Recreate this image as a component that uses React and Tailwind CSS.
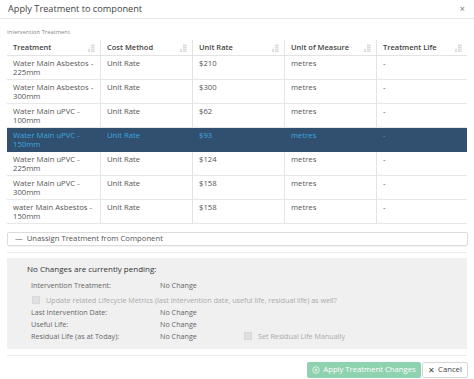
import React from 'react'

const rows = [
  { t: 'Water Main Asbestos - 225mm', c: 'Unit Rate', r: '$210', u: 'metres', l: '-' },
  { t: 'Water Main Asbestos - 300mm', c: 'Unit Rate', r: '$300', u: 'metres', l: '-' },
  { t: 'Water Main uPVC - 100mm', c: 'Unit Rate', r: '$62', u: 'metres', l: '-' },
  { t: 'Water Main uPVC - 150mm', c: 'Unit Rate', r: '$93', u: 'metres', l: '-', sel: true },
  { t: 'Water Main uPVC - 225mm', c: 'Unit Rate', r: '$124', u: 'metres', l: '-' },
  { t: 'Water Main uPVC - 300mm', c: 'Unit Rate', r: '$158', u: 'metres', l: '-' },
  { t: 'water Main Asbestos - 150mm', c: 'Unit Rate', r: '$158', u: 'metres', l: '-' },
]

function SortIcon() {
  return (
    <svg width="7" height="8" viewBox="0 0 7 8" className="shrink-0">
      <path d="M1 4.8v2.6M0.3 6.8l0.7 0.7 0.7-0.7" stroke="#a0a5aa" strokeWidth="0.6" fill="none" />
      <path d="M3 1.2h3.6M3 3.2h3.6M3 5.2h3.6M3 7.2h3.6" stroke="#a0a5aa" strokeWidth="0.6" />
    </svg>
  )
}

const headers = ['Treatment', 'Cost Method', 'Unit Rate', 'Unit of Measure', 'Treatment Life']

export default function App() {
  return (
    <div
      className="w-[474px] h-[379px] overflow-hidden bg-white text-[#555]"
      style={{ fontFamily: '"Open Sans", "Liberation Sans", sans-serif' }}
    >
      {/* header */}
      <div className="h-[19px] flex items-center justify-between px-2 border-b border-[#e6e6e6]">
        <span className="text-[9.2px] text-[#444]">Apply Treatment to component</span>
        <span className="text-[9px] text-[#777] pr-[1px]">×</span>
      </div>

      <div className="px-[7px]">
        <div className="text-[5.8px] text-[#888] pt-[10px] h-[21px] leading-[7px]">Intervention Treatment</div>

        <div className="w-[460px]">
          <div className="grid grid-cols-[93px_92px_92px_92px_91px] h-[16px] border-b border-[#e3e3e3]">
            {headers.map((h, i) => (
              <div
                key={h}
                className={`flex items-center justify-between pl-[6px] pr-[5px] ${i > 0 ? 'border-l border-[#e3e3e3]' : ''}`}
              >
                <span className="text-[7.5px] font-semibold text-[#444]">{h}</span>
                <SortIcon />
              </div>
            ))}
          </div>

          {rows.map((row, idx) => {
            const cells = [row.t, row.c, row.r, row.u, row.l]
            return (
              <div
                key={idx}
                className={`grid grid-cols-[93px_92px_92px_92px_91px] h-[24px] border-b ${
                  row.sel ? 'bg-[#31506f] border-[#31506f] text-[#3aa6e0]' : 'border-[#e8e8e8] text-[#555]'
                }`}
              >
                {cells.map((c, i) => (
                  <div
                    key={i}
                    className={`pl-[6px] pr-[3px] pt-[3px] text-[7.7px] leading-[9px] ${
                      i > 0 ? (row.sel ? 'border-l border-[#31506f]' : 'border-l border-[#e3e3e3]') : ''
                    }`}
                  >
                    {c}
                  </div>
                ))}
              </div>
            )
          })}
        </div>

        <div className="mt-[8px] h-[14px] w-[461px] border border-[#dcdcdc] rounded-[2px] flex items-center pl-[7px] text-[7.7px] text-[#555] shadow-[0_1px_1px_rgba(0,0,0,0.05)]">
          <span className="mr-[4px] text-[#666]">—</span>
          Unassign Treatment from Component
        </div>

        <div className="mt-[6px] border-t border-[#ececec]" />

        <div className="mt-[5px] w-[460px] h-[91px] bg-[#f0f0f1] pl-[20px] pt-[6px]">
          <div className="text-[8px] text-[#333] leading-[10px]">No Changes are currently pending:</div>
          <div className="pl-[4px] mt-[5px] text-[7.2px] leading-[12px] text-[#666] whitespace-nowrap">
            <div className="flex">
              <span className="w-[129px] shrink-0">Intervention Treatment:</span>
              <span>No Change</span>
            </div>
            <div className="flex items-center mt-[3px] text-[#aaa]">
              <span className="w-[8px] h-[8px] bg-[#e0e0e2] border border-[#d8d8da] mr-[6px] ml-[1px]" />
              Update related Lifecycle Metrics (last intervention date, useful life, residual life) as well?
            </div>
            <div className="flex">
              <span className="w-[129px] shrink-0">Last Intervention Date:</span>
              <span>No Change</span>
            </div>
            <div className="flex">
              <span className="w-[129px] shrink-0">Useful Life:</span>
              <span>No Change</span>
            </div>
            <div className="flex items-center">
              <span className="w-[129px] shrink-0">Residual Life (as at Today):</span>
              <span className="w-[84px] shrink-0">No Change</span>
              <span className="w-[8px] h-[8px] bg-[#e0e0e2] border border-[#d8d8da] mr-[6px]" />
              <span className="text-[#aaa]">Set Residual Life Manually</span>
            </div>
          </div>
        </div>

        <div className="mt-[6px] border-t border-[#ececec]" />

        <div className="flex justify-end gap-[1px] mt-[6px] w-[461px]">
          <div className="h-[16px] w-[114px] bg-[#8fd2b0] rounded-[2px] flex items-center justify-center text-[7.7px] text-white">
            <svg width="8" height="8" viewBox="0 0 8 8" className="mr-[3px]">
              <circle cx="4" cy="4" r="3.3" stroke="white" strokeWidth="0.7" fill="none" />
              <path d="M4 2.4v3.2M2.4 4h3.2" stroke="white" strokeWidth="0.7" />
            </svg>
            Apply Treatment Changes
          </div>
          <div className="h-[16px] w-[46px] border border-[#d6d6d6] rounded-[2px] flex items-center justify-center text-[7.7px] text-[#444]">
            <span className="mr-[3px] text-[8px]">✕</span>Cancel
          </div>
        </div>
      </div>
    </div>
  )
}
